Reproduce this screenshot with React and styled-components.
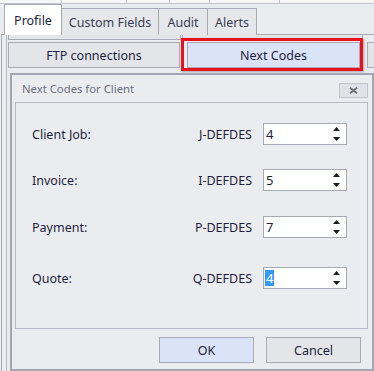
import React from "react";
import styled, { createGlobalStyle } from "styled-components";

const Global = createGlobalStyle`
  html, body { margin: 0; padding: 0; background: #ebecf0; }
  body { font-family: "Noto Sans", "Open Sans", sans-serif; font-size: 12px; color: #1e1f3c; }
`;

const Page = styled.div`
  position: relative;
  width: 374px;
  height: 371px;
  overflow: hidden;
  background: #ebecf0;
`;

const TopStrip = styled.div`
  display: flex;
  height: 3px;
  background: #f6f6f8;
  border-bottom: 1px solid #c3c5cc;
`;

const StripCell = styled.div`
  flex: 0 0 ${(p) => p.$w}px;
  border-right: 1px solid #c3c5cc;
  box-sizing: border-box;
`;

const TabBar = styled.div`
  display: flex;
  align-items: flex-end;
  height: 31px;
  padding-left: 4px;
  position: relative;
  z-index: 1;
`;

const Tab = styled.div`
  box-sizing: border-box;
  width: ${(p) => p.$w}px;
  height: ${(p) => (p.$active ? 31 : 27)}px;
  display: flex;
  align-items: center;
  justify-content: center;
  font-size: 12.5px;
  color: ${(p) => (p.$active ? "#1e1f3c" : "#3a3c55")};
  background: ${(p) => (p.$active ? "#ffffff" : "#e6e7eb")};
  border: 1px solid #a9abb4;
  border-bottom: ${(p) => (p.$active ? "1px solid #ffffff" : "none")};
  margin-left: -1px;
  padding-top: ${(p) => (p.$active ? 1 : 0)}px;
  &:first-child { margin-left: 0; }
`;

const Panel = styled.div`
  position: relative;
  height: 336px;
  margin-top: -1px;
  border-top: 1px solid #a9abb4;
  border-left: 1px solid #a9abb4;
  margin-left: 1px;
  background: #ebecf0;
`;

const PanelInner = styled.div`
  margin-left: 4px;
  height: 100%;
  border-left: 1px solid #b5b7c0;
  display: flex;
  flex-direction: column;
`;

const CutRow = styled.div`
  display: flex;
  height: 5px;
  padding-left: 1px;
`;

const GhostButton = styled.div`
  box-sizing: border-box;
  width: ${(p) => p.$w}px;
  height: 5px;
  border: 1px solid #a9abb4;
  border-top: none;
  background: #e4e5e9;
  margin-right: 1px;
`;

const ButtonRow = styled.div`
  display: flex;
  align-items: flex-start;
  margin-top: -2px;
  padding-left: 1px;
`;

const NavButton = styled.div`
  box-sizing: border-box;
  flex: 0 0 ${(p) => p.$w}px;
  height: 26px;
  margin-top: ${(p) => p.$mt || 0}px;
  display: flex;
  align-items: center;
  justify-content: center;
  font-size: 12.5px;
  color: #1e1f3c;
  background: ${(p) => (p.$primary ? "#dbe3f8" : "#e4e5e9")};
  border: 1px solid #a9abb4;
`;

const Highlight = styled.div`
  margin-left: 1px;
  border: 3px solid #e8121c;
  padding: 1px 0 0 3px;
  box-shadow: 1px 1px 2px rgba(0, 0, 0, 0.3);
  margin-right: 4px;
  display: flex;
`;

const Dialog = styled.div`
  position: absolute;
  left: 8px;
  top: 38px;
  width: 364px;
  height: 298px;
  box-sizing: border-box;
  background: #ebecf0;
  border: 2px solid #a3a6b0;
  display: flex;
  flex-direction: column;
  padding: 0 4px 0 3px;
`;

const TitleBar = styled.div`
  display: flex;
  align-items: center;
  justify-content: space-between;
  height: 27px;
  padding-left: 7px;
`;

const Title = styled.div`
  font-size: 11.3px;
  color: #6c6f7a;
`;

const CloseButton = styled.div`
  box-sizing: border-box;
  width: 29px;
  height: 15px;
  margin-top: 4px;
  border: 1px solid #c3c5cc;
  background: #e1e2e7;
  display: flex;
  align-items: center;
  justify-content: center;
`;

const Content = styled.div`
  box-sizing: border-box;
  height: 227px;
  border: 1px solid #b9bbc4;
  padding: 20px 20px 0 16px;
  display: flex;
  flex-direction: column;
`;

const FieldRow = styled.div`
  display: flex;
  align-items: center;
  height: 22px;
  margin-top: ${(p) => p.$mt}px;
  &:first-child { margin-top: 0; }
`;

const Label = styled.div`
  flex: 1;
  font-size: 12.5px;
  color: #1e1f3c;
`;

const Prefix = styled.div`
  font-size: 12.5px;
  color: #1e1f3c;
  margin-right: 11px;
`;

const SpinBox = styled.div`
  box-sizing: border-box;
  width: 84px;
  height: 22px;
  border: 1px solid #a9abb4;
  background: #ffffff;
  display: flex;
  align-items: center;
  padding-left: 1px;
`;

const Value = styled.span`
  font-size: 13px;
  line-height: 16px;
  padding: 0 1px;
  color: ${(p) => (p.$selected ? "#ffffff" : "#1e1f3c")};
  background: ${(p) => (p.$selected ? "#3399ff" : "transparent")};
`;

const Arrows = styled.div`
  margin-left: auto;
  margin-right: 6px;
  display: flex;
  flex-direction: column;
  gap: 6px;
`;

const Footer = styled.div`
  flex: 1;
  display: flex;
  justify-content: flex-end;
  align-items: flex-start;
  padding: 8px 7px 0 0;
  gap: 12px;
`;

const DialogButton = styled.div`
  box-sizing: border-box;
  width: 95px;
  height: 26px;
  display: flex;
  align-items: center;
  justify-content: center;
  font-size: 12.5px;
  color: #1e1f3c;
  background: ${(p) => (p.$primary ? "#dbe3f8" : "#e4e5e9")};
  border: 1px solid #a9abb4;
`;

const SpinArrows = () => (
  <Arrows>
    <svg width="7" height="4" viewBox="0 0 7 4">
      <path d="M3.5 0 L7 4 L0 4 Z" fill="#1a1a1a" />
    </svg>
    <svg width="7" height="4" viewBox="0 0 7 4">
      <path d="M0 0 L7 0 L3.5 4 Z" fill="#1a1a1a" />
    </svg>
  </Arrows>
);

const fields = [
  { label: "Client Job:", prefix: "J-DEFDES", value: "4", mt: 0 },
  { label: "Invoice:", prefix: "I-DEFDES", value: "5", mt: 24 },
  { label: "Payment:", prefix: "P-DEFDES", value: "7", mt: 25 },
  { label: "Quote:", prefix: "Q-DEFDES", value: "4", mt: 29, selected: true },
];

export default function App() {
  return (
    <>
      <Global />
      <Page>
        <TopStrip>
          <StripCell $w={62} />
          <StripCell $w={65} />
          <StripCell $w={43} />
          <StripCell $w={40} />
          <StripCell $w={70} />
        </TopStrip>
        <TabBar>
          <Tab $active $w={58}>Profile</Tab>
          <Tab $w={98}>Custom Fields</Tab>
          <Tab $w={50}>Audit</Tab>
          <Tab $w={50}>Alerts</Tab>
        </TabBar>
        <Panel>
          <PanelInner>
            <CutRow>
              <GhostButton $w={173} />
              <GhostButton $w={181} />
            </CutRow>
            <ButtonRow>
              <NavButton $w={172} $mt={4}>FTP connections</NavButton>
              <Highlight>
                <NavButton $w={173} $primary>Next Codes</NavButton>
              </Highlight>
              <NavButton $w={40} $mt={4} />
            </ButtonRow>
          </PanelInner>
          <Dialog>
            <TitleBar>
              <Title>Next Codes for Client</Title>
              <CloseButton>
                <svg width="9" height="7" viewBox="0 0 9 7">
                  <path d="M1 0.8 L8 6.2 M8 0.8 L1 6.2" stroke="#6f717c" strokeWidth="2" />
                </svg>
              </CloseButton>
            </TitleBar>
            <Content>
              {fields.map((f) => (
                <FieldRow key={f.label} $mt={f.mt}>
                  <Label>{f.label}</Label>
                  <Prefix>{f.prefix}</Prefix>
                  <SpinBox>
                    <Value $selected={f.selected}>{f.value}</Value>
                    <SpinArrows />
                  </SpinBox>
                </FieldRow>
              ))}
            </Content>
            <Footer>
              <DialogButton $primary>OK</DialogButton>
              <DialogButton>Cancel</DialogButton>
            </Footer>
          </Dialog>
        </Panel>
      </Page>
    </>
  );
}
